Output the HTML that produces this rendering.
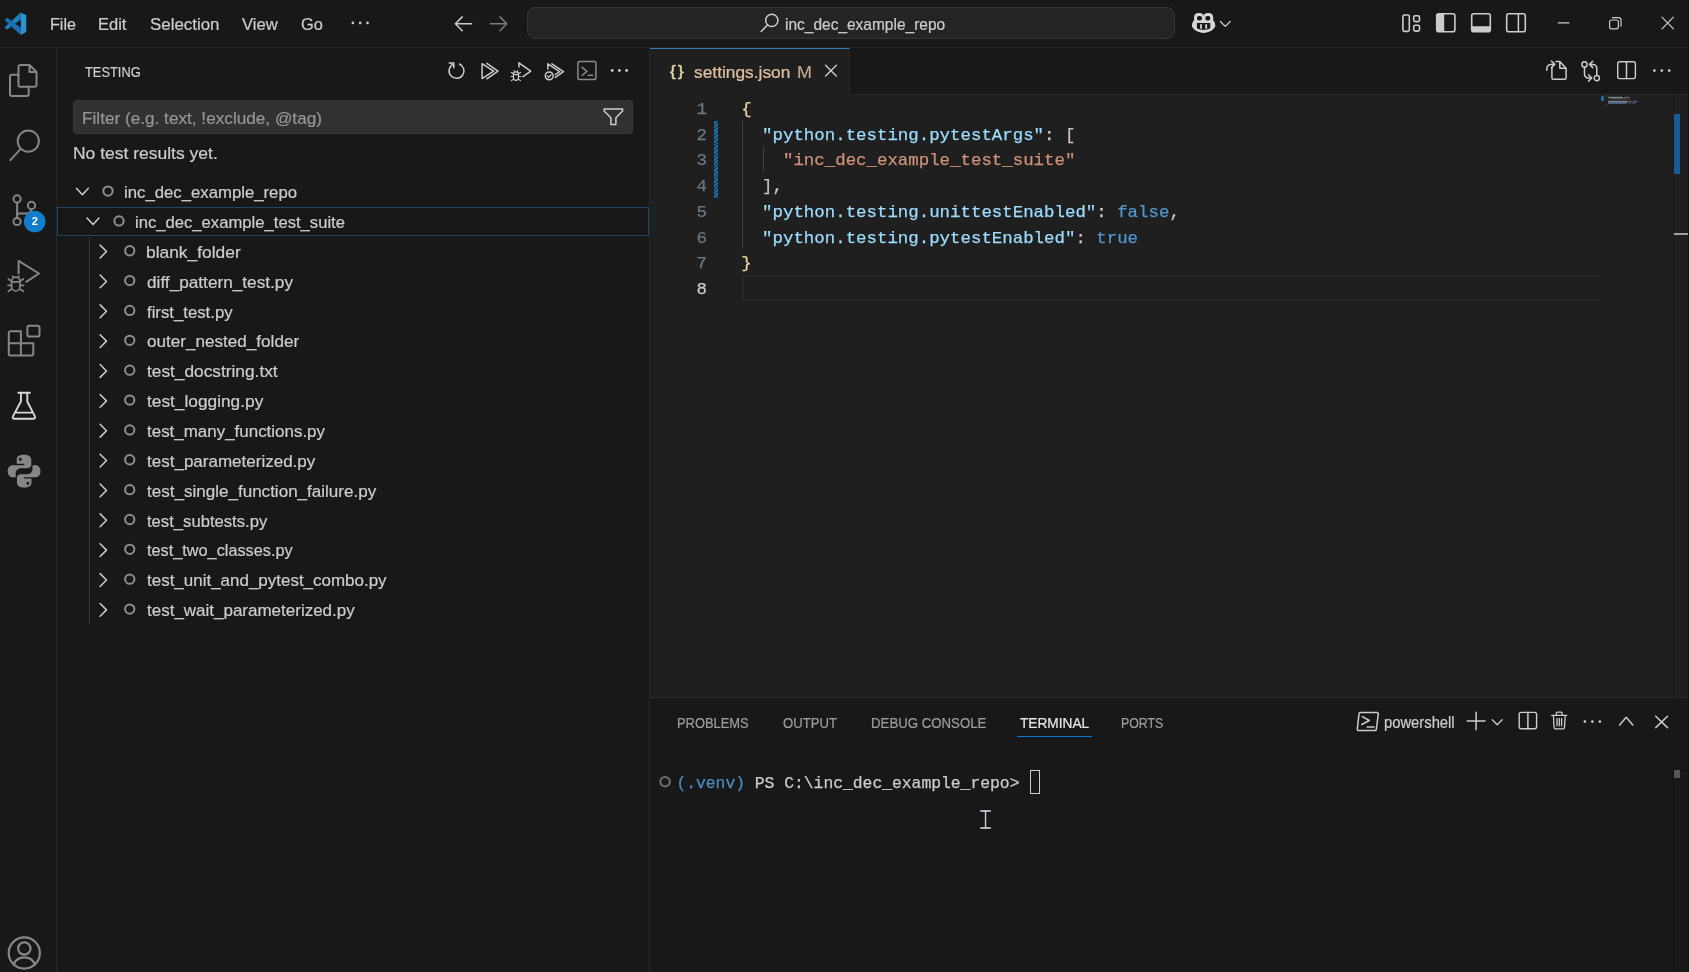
<!DOCTYPE html>
<html lang="en"><head><meta charset="utf-8"><title>settings.json - inc_dec_example_repo - Visual Studio Code</title>
<style>
html,body{margin:0;padding:0;background:#181818;}
body{width:1689px;height:972px;position:relative;overflow:hidden;font-family:"Liberation Sans",sans-serif;}
.b{position:absolute;box-sizing:border-box;}
.t{position:absolute;white-space:pre;transform-origin:0 0;-webkit-text-stroke:0.22px;font-family:"Liberation Sans",sans-serif;}
.c{position:absolute;white-space:pre;-webkit-text-stroke:0.25px;font-family:"Liberation Mono",monospace;font-size:17.42px;line-height:17.42px;letter-spacing:-0.002px;}
svg{position:absolute;left:0;top:0;}
</style></head><body>

<div class="b" style="left:0;top:0;width:1689px;height:48px;background:#181818;border-bottom:1px solid #262626"></div>
<div class="b" style="left:0;top:48px;width:57px;height:924px;background:#181818;border-right:1px solid #252525"></div>
<div class="b" style="left:57px;top:48px;width:593px;height:924px;background:#181818;border-right:1px solid #282828"></div>
<div class="b" style="left:527px;top:7px;width:647.5px;height:32px;background:#242424;border:1px solid #353535;border-radius:8px"></div>
<div class="b" style="left:73.4px;top:100.2px;width:559.6px;height:33.6px;background:#313131;border:1px solid #383838;border-radius:3.5px"></div>
<div class="b" style="left:57px;top:206.5px;width:592px;height:29.8px;border:1.6px solid #1d4568;background:#171717"></div>
<div class="b" style="left:89px;top:236.5px;width:1.2px;height:388px;background:#3a3a3a"></div>
<div class="b" style="left:650px;top:48px;width:1039px;height:47px;background:#181818;border-bottom:1px solid #282828"></div>
<div class="b" style="left:650px;top:48px;width:200px;height:47px;background:#1f1f1f;border-top:1.6px solid #3a79ad;border-right:1px solid #282828"></div>
<div class="b" style="left:650px;top:95px;width:1039px;height:603px;background:#1f1f1f"></div>
<div class="b" style="left:650px;top:697px;width:1039px;height:275px;background:#181818;border-top:1px solid #282828"></div>
<div class="b" style="left:742.4px;top:275.2px;width:858px;height:26.3px;border:2.6px solid #282828;border-right:none"></div>
<div class="b" style="left:713.6px;top:120.6px;width:4.6px;height:77.4px;background:repeating-linear-gradient(-45deg,#2676b0 0 1.3px,#134264 1.3px 2.6px)"></div>
<div class="b" style="left:742.0px;top:120.8px;width:1.2px;height:128px;background:#404040"></div>
<div class="b" style="left:763.3px;top:146.3px;width:1.2px;height:26px;background:#404040"></div>
<div class="b" style="left:1017px;top:736px;width:75px;height:1.4px;background:#0078d4"></div>
<div class="b" style="left:1673px;top:95px;width:1px;height:603px;background:#191919"></div>
<div class="b" style="left:1688px;top:0;width:1px;height:972px;background:#141414"></div>
<div class="b" style="left:1674px;top:114.4px;width:6.2px;height:59.4px;background:#175d94"></div>
<div class="b" style="left:1674px;top:233px;width:14px;height:2.2px;background:#a0a0a0"></div>
<div class="b" style="left:1673px;top:770px;width:15px;height:202px;border-left:1px solid #0f0f0f;border-top:1px solid #0f0f0f"></div>
<div class="b" style="left:1674px;top:770.2px;width:6.1px;height:7.9px;background:#585858"></div>
<div class="b" style="left:1029.8px;top:769.9px;width:10.4px;height:23.7px;border:1.35px solid #cdcdcd"></div>

<div id="txt" style="position:absolute;left:0;top:0;width:1689px;height:972px;will-change:transform">
<span class="t" id="m1" style="left:50.17px;top:15.87px;font-size:17.4px;line-height:17.4px;color:#cccccc;transform:scaleX(0.9260);">File</span>
<span class="t" id="m2" style="left:98.30px;top:15.87px;font-size:17.4px;line-height:17.4px;color:#cccccc;transform:scaleX(0.9490);">Edit</span>
<span class="t" id="m3" style="left:150.25px;top:15.87px;font-size:17.4px;line-height:17.4px;color:#cccccc;transform:scaleX(0.9701);">Selection</span>
<span class="t" id="m4" style="left:242.25px;top:15.87px;font-size:17.4px;line-height:17.4px;color:#cccccc;transform:scaleX(0.9585);">View</span>
<span class="t" id="m5" style="left:301.25px;top:15.87px;font-size:17.4px;line-height:17.4px;color:#cccccc;transform:scaleX(0.9433);">Go</span>
<span class="t" id="cc" style="left:785.29px;top:15.87px;font-size:16.1px;line-height:16.1px;color:#cccccc;transform:scaleX(0.9624);">inc_dec_example_repo</span>
<span class="t" id="sh" style="left:84.70px;top:65.06px;font-size:14.7px;line-height:14.7px;color:#cccccc;transform:scaleX(0.8747);">TESTING</span>
<span class="t" id="fl" style="left:81.51px;top:109.87px;font-size:17.4px;line-height:17.4px;color:#959595;transform:scaleX(0.9881);">Filter (e.g. text, !exclude, @tag)</span>
<span class="t" id="nr" style="left:73.20px;top:144.67px;font-size:17.4px;line-height:17.4px;color:#cccccc;transform:scaleX(1.0051);">No test results yet.</span>
<span class="t" id="r0" style="left:124.34px;top:184.17px;font-size:17.4px;line-height:17.4px;color:#cccccc;transform:scaleX(0.9621);">inc_dec_example_repo</span>
<span class="t" id="r1" style="left:135.34px;top:214.03px;font-size:17.4px;line-height:17.4px;color:#cccccc;transform:scaleX(0.9569);">inc_dec_example_test_suite</span>
<span class="t" id="r2" style="left:146.20px;top:243.89px;font-size:17.4px;line-height:17.4px;color:#cccccc;transform:scaleX(0.9994);">blank_folder</span>
<span class="t" id="r3" style="left:147.20px;top:273.75px;font-size:17.4px;line-height:17.4px;color:#cccccc;transform:scaleX(0.9892);">diff_pattern_test.py</span>
<span class="t" id="r4" style="left:147.20px;top:303.61px;font-size:17.4px;line-height:17.4px;color:#cccccc;transform:scaleX(0.9628);">first_test.py</span>
<span class="t" id="r5" style="left:147.20px;top:333.47px;font-size:17.4px;line-height:17.4px;color:#cccccc;transform:scaleX(0.9832);">outer_nested_folder</span>
<span class="t" id="r6" style="left:147.20px;top:363.33px;font-size:17.4px;line-height:17.4px;color:#cccccc;transform:scaleX(0.9937);">test_docstring.txt</span>
<span class="t" id="r7" style="left:147.20px;top:393.19px;font-size:17.4px;line-height:17.4px;color:#cccccc;transform:scaleX(0.9941);">test_logging.py</span>
<span class="t" id="r8" style="left:147.20px;top:423.05px;font-size:17.4px;line-height:17.4px;color:#cccccc;transform:scaleX(0.9743);">test_many_functions.py</span>
<span class="t" id="r9" style="left:147.20px;top:452.91px;font-size:17.4px;line-height:17.4px;color:#cccccc;transform:scaleX(0.9781);">test_parameterized.py</span>
<span class="t" id="r10" style="left:147.20px;top:482.77px;font-size:17.4px;line-height:17.4px;color:#cccccc;transform:scaleX(0.9797);">test_single_function_failure.py</span>
<span class="t" id="r11" style="left:147.20px;top:512.63px;font-size:17.4px;line-height:17.4px;color:#cccccc;transform:scaleX(0.9566);">test_subtests.py</span>
<span class="t" id="r12" style="left:147.20px;top:542.49px;font-size:17.4px;line-height:17.4px;color:#cccccc;transform:scaleX(0.9357);">test_two_classes.py</span>
<span class="t" id="r13" style="left:147.20px;top:572.35px;font-size:17.4px;line-height:17.4px;color:#cccccc;transform:scaleX(0.9757);">test_unit_and_pytest_combo.py</span>
<span class="t" id="r14" style="left:147.20px;top:602.21px;font-size:17.4px;line-height:17.4px;color:#cccccc;transform:scaleX(0.9767);">test_wait_parameterized.py</span>
<span class="t" id="tj" style="left:669.50px;top:62.90px;font-size:15.0px;line-height:15.0px;color:#e6d3aa;transform:scaleX(1.1200);-webkit-text-stroke:0.55px;">{</span>
<span class="t" id="tk" style="left:678.30px;top:62.90px;font-size:15.0px;line-height:15.0px;color:#e6d3aa;transform:scaleX(1.1200);-webkit-text-stroke:0.55px;">}</span>
<span class="t" id="tb" style="left:693.70px;top:64.17px;font-size:17.4px;line-height:17.4px;color:#dfc0a0;transform:scaleX(0.9969);">settings.json</span>
<span class="t" id="tm" style="left:796.67px;top:64.17px;font-size:17.4px;line-height:17.4px;color:#c4a68a;transform:scaleX(1.0308);">M</span>
<span class="t" id="p1" style="left:677.12px;top:715.76px;font-size:14.7px;line-height:14.7px;color:#9d9d9d;transform:scaleX(0.8785);">PROBLEMS</span>
<span class="t" id="p2" style="left:783.40px;top:715.76px;font-size:14.7px;line-height:14.7px;color:#9d9d9d;transform:scaleX(0.8956);">OUTPUT</span>
<span class="t" id="p3" style="left:870.70px;top:715.76px;font-size:14.7px;line-height:14.7px;color:#9d9d9d;transform:scaleX(0.9007);">DEBUG CONSOLE</span>
<span class="t" id="p4" style="left:1019.90px;top:715.76px;font-size:14.7px;line-height:14.7px;color:#e7e7e7;transform:scaleX(0.9313);">TERMINAL</span>
<span class="t" id="p5" style="left:1121.46px;top:715.76px;font-size:14.7px;line-height:14.7px;color:#9d9d9d;transform:scaleX(0.8398);">PORTS</span>
<span class="t" id="ps" style="left:1384.18px;top:714.37px;font-size:16.1px;line-height:16.1px;color:#cccccc;transform:scaleX(0.9183);">powershell</span>
<span class="c" style="left:675.65px;width:31.35px;text-align:right;top:101.05px;color:#6e7681">1</span>
<span class="c" style="left:741.20px;top:101.05px"><span style="color:#ead39f">{</span></span>
<span class="c" style="left:675.65px;width:31.35px;text-align:right;top:126.75px;color:#6e7681">2</span>
<span class="c" style="left:741.20px;top:126.75px"><span style="color:#cccccc">  </span><span style="color:#9cdcfe">&quot;python.testing.pytestArgs&quot;</span><span style="color:#cccccc">: </span><span style="color:#c9bdc6">[</span></span>
<span class="c" style="left:675.65px;width:31.35px;text-align:right;top:152.45px;color:#6e7681">3</span>
<span class="c" style="left:741.20px;top:152.45px"><span style="color:#cccccc">    </span><span style="color:#ce9178">&quot;inc_dec_example_test_suite&quot;</span></span>
<span class="c" style="left:675.65px;width:31.35px;text-align:right;top:178.15px;color:#6e7681">4</span>
<span class="c" style="left:741.20px;top:178.15px"><span style="color:#cccccc">  </span><span style="color:#c9bdc6">]</span><span style="color:#cccccc">,</span></span>
<span class="c" style="left:675.65px;width:31.35px;text-align:right;top:203.85px;color:#6e7681">5</span>
<span class="c" style="left:741.20px;top:203.85px"><span style="color:#cccccc">  </span><span style="color:#9cdcfe">&quot;python.testing.unittestEnabled&quot;</span><span style="color:#cccccc">: </span><span style="color:#4f97cf">false</span><span style="color:#cccccc">,</span></span>
<span class="c" style="left:675.65px;width:31.35px;text-align:right;top:229.55px;color:#6e7681">6</span>
<span class="c" style="left:741.20px;top:229.55px"><span style="color:#cccccc">  </span><span style="color:#9cdcfe">&quot;python.testing.pytestEnabled&quot;</span><span style="color:#cccccc">: </span><span style="color:#4f97cf">true</span></span>
<span class="c" style="left:675.65px;width:31.35px;text-align:right;top:255.25px;color:#6e7681">7</span>
<span class="c" style="left:741.20px;top:255.25px"><span style="color:#ead39f">}</span></span>
<span class="c" style="left:675.65px;width:31.35px;text-align:right;top:280.95px;color:#cccccc">8</span>
<span class="c" style="left:676.4px;top:776.33px;font-size:16.4px;line-height:16.4px;letter-spacing:-0.035px"><span style="color:#4b8cc2">(.venv)</span><span style="color:#cccccc"> PS C:\inc_dec_example_repo&gt; </span></span>
</div>
<svg width="1689" height="972" viewBox="0 0 1689 972"><path d="M20.6,12.4 L26.3,15.2 V32.1 L20.6,34.9 Z" fill="#2b93d4" />
<path d="M20.6,12.4 V19.8 L7.3,29.6 L4.5,27.4 Z" fill="#1e7cc0" />
<path d="M4.5,19.9 L7.3,17.7 L20.6,27.5 V34.9 Z" fill="#1a70b0" />
<path d="M20.6,19.8 V27.5 L15.4,23.65 Z" fill="#181818" />
<path d="M471.6,23.8 H455.6 M462.2,16.900 L455.4,23.8 L462.2,30.700" fill="none" stroke="#cccccc" stroke-width="1.5" stroke-linecap="round" stroke-linejoin="round" />
<path d="M490.4,23.8 H506.6 M500,16.900 L506.8,23.8 L500,30.700" fill="none" stroke="#7d7d7d" stroke-width="1.5" stroke-linecap="round" stroke-linejoin="round" />
<path d="M777.9,20.4 a6.1,6.1 0 1 1 -12.2,0 a6.1,6.1 0 1 1 12.2,0 Z M767.4,25 L761.2,31.4" fill="none" stroke="#cccccc" stroke-width="1.5" stroke-linecap="round" stroke-linejoin="round" />
<rect x="1194" y="13.1" width="10" height="10.4" rx="4.3" fill="#d6d6d6"/><rect x="1203.2" y="13.1" width="10" height="10.4" rx="4.3" fill="#d6d6d6"/>
<path d="M1194.2,20 C1192.8,21.6 1192,23.2 1192,25 v1.600 c1.800,3.800 6.400,6.300 11.600,6.300 c5.200,0 9.800,-2.500 11.600,-6.300 v-1.600 c0,-1.800 -0.800,-3.400 -2.200,-5 Z" fill="#d6d6d6" />
<path d="M1199,16.1 h1 a2,2 0 0 1 2,2 v0.500 a2,2 0 0 1 -2,2 h-1 a2,2 0 0 1 -2,-2 v-0.500 a2,2 0 0 1 2,-2 Z M1207.300,16.100 h1 a2,2 0 0 1 2,2 v0.500 a2,2 0 0 1 -2,2 h-1 a2,2 0 0 1 -2,-2 v-0.500 a2,2 0 0 1 2,-2 Z" fill="#181818" />
<path d="M1196.900,23 H1210.300 V28.300 c-1.800,1 -4.200,1.500 -6.700,1.500 c-2.500,0 -4.900,-0.500 -6.700,-1.500 Z" fill="#181818" />
<path d="M1200.100,24.200 h1.800 v4.600 h-1.800 Z M1205.300,24.200 h1.800 v4.600 h-1.800 Z" fill="#d6d6d6" />
<path d="M1220.4,21.5 L1225.3,26.4 L1230.2,21.5" fill="none" stroke="#cccccc" stroke-width="1.3" stroke-linecap="round" stroke-linejoin="round" />
<rect x="1402.9" y="15" width="6.4" height="16.4" rx="1.6" fill="none" stroke="#cccccc" stroke-width="1.6"/>
<rect x="1413.7" y="15.7" width="5.8" height="5.9" rx="1.6" fill="none" stroke="#cccccc" stroke-width="1.6"/>
<rect x="1413.7" y="25.2" width="5.8" height="5.9" rx="1.6" fill="none" stroke="#cccccc" stroke-width="1.6"/>
<rect x="1436.7" y="13.8" width="18.2" height="18" rx="2" fill="none" stroke="#cccccc" stroke-width="1.6"/>
<path d="M1438.6,13.8 H1444.2 V31.8 H1438.6 a2,2 0 0 1 -2,-2 V15.8 a2,2 0 0 1 2,-2 Z" fill="#cccccc" />
<rect x="1471.7" y="13.8" width="18.6" height="18" rx="2" fill="none" stroke="#cccccc" stroke-width="1.6"/>
<path d="M1471.7,26.2 H1490.3 V29.8 a2,2 0 0 1 -2,2 H1473.7 a2,2 0 0 1 -2,-2 Z" fill="#cccccc" />
<rect x="1506.7" y="13.8" width="18.6" height="18" rx="2" fill="none" stroke="#cccccc" stroke-width="1.6"/>
<path d="M1518.4,13.8 V31.8" fill="none" stroke="#cccccc" stroke-width="1.5" stroke-linecap="round" stroke-linejoin="round" />
<path d="M1558.2,22.8 H1569" fill="none" stroke="#cccccc" stroke-width="1.2" stroke-linecap="round" stroke-linejoin="round" />
<rect x="1609.6" y="20" width="8.8" height="8.8" rx="2" fill="none" stroke="#cccccc" stroke-width="1.2"/>
<path d="M1612.4,17.6 H1618.6 a2.4,2.4 0 0 1 2.4,2.4 V26.2" fill="none" stroke="#cccccc" stroke-width="1.2" stroke-linecap="round" stroke-linejoin="round" />
<path d="M1662,17.2 L1673.4,28.8 M1673.4,17.2 L1662,28.8" fill="none" stroke="#cccccc" stroke-width="1.2" stroke-linecap="round" stroke-linejoin="round" />
<path d="M29.5,65 H20.2 a1.7,1.7 0 0 0 -1.7,1.7 V85 a1.700,1.700 0 0 0 1.7,1.7 H34.800 a1.700,1.700 0 0 0 1.7,-1.7 V72 L29.5,65 V72 H36.5" fill="none" stroke="#868686" stroke-width="2" stroke-linecap="round" stroke-linejoin="round" />
<path d="M18.5,74.8 H11.700 a1.700,1.700 0 0 0 -1.7,1.7 V94.2 a1.700,1.700 0 0 0 1.7,1.7 H27 a1.700,1.700 0 0 0 1.7,-1.7 V86.700" fill="none" stroke="#868686" stroke-width="2" stroke-linecap="round" stroke-linejoin="round" />
<path d="M38.9,141.1 a10.600,10.600 0 1 1 -21.2,0 a10.600,10.600 0 1 1 21.2,0 Z M20.9,148.700 L10.400,160.200" fill="none" stroke="#868686" stroke-width="2" stroke-linecap="round" stroke-linejoin="round" />
<path d="M20.700,198.9 a3.600,3.600 0 1 1 -7.2,0 a3.600,3.600 0 1 1 7.2,0 Z M20.700,221.5 a3.600,3.600 0 1 1 -7.2,0 a3.600,3.600 0 1 1 7.2,0 Z M35.100,205.4 a3.600,3.600 0 1 1 -7.2,0 a3.600,3.600 0 1 1 7.2,0 Z M17.100,202.5 V217.900 M31.200,209 c0,3 -2.200,4.500 -5.600,4.500 H17.100" fill="none" stroke="#868686" stroke-width="2" stroke-linecap="round" stroke-linejoin="round" />
<circle cx="34.7" cy="221.5" r="10.8" fill="#127dcb"/>
<text x="34.8" y="225.4" font-family="Liberation Sans, sans-serif" font-size="11" font-weight="bold" fill="#ffffff" text-anchor="middle">2</text>
<circle cx="352.9" cy="22.9" r="1.35" fill="#cccccc"/><circle cx="360.2" cy="22.9" r="1.35" fill="#cccccc"/><circle cx="367.5" cy="22.9" r="1.35" fill="#cccccc"/>
<path d="M18.600,273.200 V260.900 L39,273.500 L26.200,281.800" fill="none" stroke="#868686" stroke-width="2" stroke-linecap="round" stroke-linejoin="round" />
<path d="M11.600,281.400 a4.200,4.200 0 0 1 8.400,0 v5.400 a4.200,4.200 0 0 1 -8.400,0 Z M11.600,281.900 h8.400 M8,285.300 h3.600 M20,285.300 h3.600 M8.400,279 l3.200,2.300 M23.200,279 l-3.200,2.300 M8.400,291.300 l3.500,-2.600 M23.200,291.300 l-3.500,-2.600 M13.800,277.700 l-1.200,-1.500 M17.800,277.700 l1.200,-1.500" fill="none" stroke="#868686" stroke-width="1.7" stroke-linecap="round" stroke-linejoin="round" />
<path d="M10.500,331.200 H20.900 V343.300 H33.300 V353.700 a1.700,1.700 0 0 1 -1.700,1.700 H10.500 a1.700,1.700 0 0 1 -1.700,-1.700 V332.900 a1.700,1.700 0 0 1 1.700,-1.700 Z M8.800,343.300 H20.900 V355.400" fill="none" stroke="#868686" stroke-width="2" stroke-linecap="round" stroke-linejoin="round" />
<rect x="27.4" y="325.7" width="12.1" height="10.9" rx="1.8" fill="none" stroke="#868686" stroke-width="2"/>
<path d="M18.300,392.700 H29.900 M20.900,392.700 V401.500 L12.900,416.400 a1.600,1.600 0 0 0 1.400,2.400 H33.500 a1.600,1.600 0 0 0 1.400,-2.400 L27.300,401.500 V392.700 M15.300,412.600 H32.500" fill="none" stroke="#d7d7d7" stroke-width="1.9" stroke-linecap="round" stroke-linejoin="round" />
<g transform="translate(7.700,454.800)" fill="#868686" fill-rule="evenodd"><path d="M16.100,0 C10.200,0 9,2.400 9,5 V9 H16.500 V10.400 H5 C2,10.400 0,13 0,16.400 C0,19.800 2,22.400 5,22.400 H8 V18.600 C8,15.600 10.400,13.400 13.200,13.400 H20 C22.200,13.400 23.600,11.800 23.600,9.800 V5 C23.600,2 21,0 16.100,0 Z M12.600,2.900 a1.500,1.500 0 1 1 0,3 a1.500,1.500 0 1 1 0,-3 Z"/><path d="M16.100,0 C10.200,0 9,2.400 9,5 V9 H16.500 V10.400 H5 C2,10.400 0,13 0,16.400 C0,19.800 2,22.400 5,22.400 H8 V18.600 C8,15.600 10.400,13.400 13.200,13.400 H20 C22.200,13.400 23.600,11.800 23.600,9.800 V5 C23.600,2 21,0 16.100,0 Z M12.600,2.900 a1.500,1.500 0 1 1 0,3 a1.500,1.500 0 1 1 0,-3 Z" transform="rotate(180 16.400 16.400)"/></g>
<path d="M39.900,953 a15.600,15.600 0 1 1 -31.200,0 a15.600,15.600 0 1 1 31.200,0 Z M30.500,948.500 a6.200,6.200 0 1 1 -12.400,0 a6.200,6.200 0 1 1 12.400,0 Z M13.600,964.800 C15.400,959.600 19.400,957.400 24.300,957.400 C29.200,957.400 33.200,959.600 35,964.800" fill="none" stroke="#868686" stroke-width="2.2" stroke-linecap="round" stroke-linejoin="round" />
<g transform="translate(446.3,59.6) scale(1.357)" fill="none" stroke="#cccccc" stroke-width="1.1" stroke-linecap="round" stroke-linejoin="round" ><path d="M2.200,2.500 H5.500 V6"/><path d="M4.900,3.500 A5.500,5.500 0 1 0 9.700,3.270"/></g>
<g transform="translate(478.7,59.7) scale(1.357)" fill="none" stroke="#cccccc" stroke-width="1.1" stroke-linecap="round" stroke-linejoin="round" ><path d="M2.500,2.900 L11,8.420 L2.500,13.900 Z"/><path d="M6,2.700 L14.200,8.420 L6,14.100"/></g>
<g transform="translate(510.1,58.9) scale(1.357)" fill="none" stroke="#cccccc" stroke-width="1.1" stroke-linecap="round" stroke-linejoin="round" ><path d="M6.500,6 V2.900 L15.200,9 L9.500,13"/><path d="M2.400,11.500 a1.900,1.900 0 0 1 3.800,0 v2.400 a1.900,1.900 0 0 1 -3.800,0 Z M2.400,11.600 h3.800 M0.700,13 h1.700 M6.200,13 h1.700 M1,10 l1.400,1 M7.600,10 l-1.400,1 M1,16 l1.500,-1.100 M7.600,16 l-1.500,-1.100 M3.400,9.500 l-0.500,-0.800 M5.200,9.500 l0.500,-0.800" stroke-width="0.85"/></g>
<g transform="translate(542.7,58.9) scale(1.357)" fill="none" stroke="#cccccc" stroke-width="1.1" stroke-linecap="round" stroke-linejoin="round" ><path d="M3.800,7.500 V3.600 L12.500,9.300 L9.300,11.500"/><path d="M6.800,3.600 L15.300,9.300 L9.300,13.600"/><circle cx="4.800" cy="12.500" r="2.900"/><path d="M3.500,12.600 l1,1 l1.700,-2" stroke-width="0.9"/></g>
<g transform="translate(575.3,58.9) scale(1.357)" fill="none" stroke="#8a8a8a" stroke-width="1.1" stroke-linecap="round" stroke-linejoin="round" ><rect x="1.900" y="1.900" width="13.300" height="13.200" rx="1.300"/><path d="M5,6.200 L8.600,9.200 L5,12.200 M9.400,12.100 H12.800"/></g>
<circle cx="612.1999999999999" cy="70.5" r="1.4" fill="#cccccc"/><circle cx="619.4" cy="70.5" r="1.4" fill="#cccccc"/><circle cx="626.6" cy="70.5" r="1.4" fill="#cccccc"/>
<path d="M604.100,108.900 H622.600 V111 L615.900,117.800 V124.400 H610.900 V117.800 L604.100,111 Z" fill="none" stroke="#cccccc" stroke-width="1.5" stroke-linecap="round" stroke-linejoin="round" />
<path d="M76.4,188.23 L82.4,194.73 L88.4,188.23" fill="none" stroke="#cccccc" stroke-width="1.5" stroke-linecap="round" stroke-linejoin="round" />
<circle cx="108.0" cy="191.03" r="4.650" fill="none" stroke="#8e8e8e" stroke-width="2"/>
<path d="M87,218.08999999999997 L93,224.58999999999997 L99,218.08999999999997" fill="none" stroke="#cccccc" stroke-width="1.5" stroke-linecap="round" stroke-linejoin="round" />
<circle cx="119.0" cy="220.89" r="4.650" fill="none" stroke="#8e8e8e" stroke-width="2"/>
<path d="M100.100,245.15 L106.500,251.55 L100.100,257.95" fill="none" stroke="#cccccc" stroke-width="1.5" stroke-linecap="round" stroke-linejoin="round" />
<circle cx="129.750" cy="250.75" r="4.650" fill="none" stroke="#8e8e8e" stroke-width="2"/>
<path d="M100.100,275.01 L106.500,281.41 L100.100,287.81" fill="none" stroke="#cccccc" stroke-width="1.5" stroke-linecap="round" stroke-linejoin="round" />
<circle cx="129.750" cy="280.61" r="4.650" fill="none" stroke="#8e8e8e" stroke-width="2"/>
<path d="M100.100,304.87 L106.500,311.27 L100.100,317.67" fill="none" stroke="#cccccc" stroke-width="1.5" stroke-linecap="round" stroke-linejoin="round" />
<circle cx="129.750" cy="310.47" r="4.650" fill="none" stroke="#8e8e8e" stroke-width="2"/>
<path d="M100.100,334.73 L106.500,341.13 L100.100,347.53" fill="none" stroke="#cccccc" stroke-width="1.5" stroke-linecap="round" stroke-linejoin="round" />
<circle cx="129.750" cy="340.33" r="4.650" fill="none" stroke="#8e8e8e" stroke-width="2"/>
<path d="M100.100,364.59 L106.500,370.99 L100.100,377.39" fill="none" stroke="#cccccc" stroke-width="1.5" stroke-linecap="round" stroke-linejoin="round" />
<circle cx="129.750" cy="370.19" r="4.650" fill="none" stroke="#8e8e8e" stroke-width="2"/>
<path d="M100.100,394.45 L106.500,400.85 L100.100,407.25" fill="none" stroke="#cccccc" stroke-width="1.5" stroke-linecap="round" stroke-linejoin="round" />
<circle cx="129.750" cy="400.05" r="4.650" fill="none" stroke="#8e8e8e" stroke-width="2"/>
<path d="M100.100,424.31 L106.500,430.71 L100.100,437.11" fill="none" stroke="#cccccc" stroke-width="1.5" stroke-linecap="round" stroke-linejoin="round" />
<circle cx="129.750" cy="429.91" r="4.650" fill="none" stroke="#8e8e8e" stroke-width="2"/>
<path d="M100.100,454.17 L106.500,460.57 L100.100,466.97" fill="none" stroke="#cccccc" stroke-width="1.5" stroke-linecap="round" stroke-linejoin="round" />
<circle cx="129.750" cy="459.77" r="4.650" fill="none" stroke="#8e8e8e" stroke-width="2"/>
<path d="M100.100,484.03 L106.500,490.43 L100.100,496.83" fill="none" stroke="#cccccc" stroke-width="1.5" stroke-linecap="round" stroke-linejoin="round" />
<circle cx="129.750" cy="489.63" r="4.650" fill="none" stroke="#8e8e8e" stroke-width="2"/>
<path d="M100.100,513.89 L106.500,520.29 L100.100,526.69" fill="none" stroke="#cccccc" stroke-width="1.5" stroke-linecap="round" stroke-linejoin="round" />
<circle cx="129.750" cy="519.49" r="4.650" fill="none" stroke="#8e8e8e" stroke-width="2"/>
<path d="M100.100,543.75 L106.500,550.15 L100.100,556.55" fill="none" stroke="#cccccc" stroke-width="1.5" stroke-linecap="round" stroke-linejoin="round" />
<circle cx="129.750" cy="549.35" r="4.650" fill="none" stroke="#8e8e8e" stroke-width="2"/>
<path d="M100.100,573.61 L106.500,580.01 L100.100,586.41" fill="none" stroke="#cccccc" stroke-width="1.5" stroke-linecap="round" stroke-linejoin="round" />
<circle cx="129.750" cy="579.21" r="4.650" fill="none" stroke="#8e8e8e" stroke-width="2"/>
<path d="M100.100,603.47 L106.500,609.87 L100.100,616.27" fill="none" stroke="#cccccc" stroke-width="1.5" stroke-linecap="round" stroke-linejoin="round" />
<circle cx="129.750" cy="609.07" r="4.650" fill="none" stroke="#8e8e8e" stroke-width="2"/>
<path d="M825.600,65.300 L836.300,76 M836.300,65.300 L825.600,76" fill="none" stroke="#cccccc" stroke-width="1.4" stroke-linecap="round" stroke-linejoin="round" />
<path d="M1551.900,67.500 V77.700 a1.500,1.500 0 0 0 1.500,1.500 H1564.600 a1.500,1.500 0 0 0 1.500,-1.500 V68.300 L1559.800,61.600 H1556 M1559.800,61.600 V68.300 H1566.100" fill="none" stroke="#cccccc" stroke-width="1.5" stroke-linecap="round" stroke-linejoin="round" />
<path d="M1546.900,70.200 V68.400 a4,4 0 0 1 4,-4 H1554.600 M1551.400,61 L1554.800,64.400 L1551.400,67.800" fill="none" stroke="#cccccc" stroke-width="1.5" stroke-linecap="round" stroke-linejoin="round" />
<path d="M1587.100,64.400 a2.600,2.600 0 1 1 -5.200,0 a2.600,2.600 0 1 1 5.200,0 Z M1599.400,78.100 a2.600,2.600 0 1 1 -5.200,0 a2.600,2.600 0 1 1 5.200,0 Z M1584.500,67.200 V74.200 a3.800,3.800 0 0 0 3.800,3.800 H1591.400 M1588.500,74.800 L1591.700,78 L1588.500,81.200 M1596.800,75.300 V68.200 a3.800,3.800 0 0 0 -3.800,-3.800 H1589.800 M1592.700,61.200 L1589.500,64.400 L1592.700,67.600" fill="none" stroke="#cccccc" stroke-width="1.5" stroke-linecap="round" stroke-linejoin="round" />
<rect x="1617.700" y="61.700" width="17.700" height="16.900" rx="2" fill="none" stroke="#cccccc" stroke-width="1.4"/>
<path d="M1626.500,61.700 V78.600" fill="none" stroke="#cccccc" stroke-width="1.5" stroke-linecap="round" stroke-linejoin="round" />
<circle cx="1654.3999999999999" cy="70.6" r="1.35" fill="#cccccc"/><circle cx="1661.8" cy="70.6" r="1.35" fill="#cccccc"/><circle cx="1669.2" cy="70.6" r="1.35" fill="#cccccc"/>
<path d="M1360.400,712.600 H1377 a1.300,1.300 0 0 1 1.300,1.500 L1376.300,729.300 a1.500,1.500 0 0 1 -1.500,1.300 H1358.600 a1.300,1.300 0 0 1 -1.300,-1.500 L1359,713.900 a1.500,1.500 0 0 1 1.400,-1.300 Z M1362.300,716.600 L1369.300,720.500 L1361.700,724.500 M1367.200,726.900 H1374" fill="none" stroke="#cccccc" stroke-width="1.5" stroke-linecap="round" stroke-linejoin="round" />
<path d="M1467.200,721 H1485 M1476.100,712.300 V729.700" fill="none" stroke="#cccccc" stroke-width="1.5" stroke-linecap="round" stroke-linejoin="round" />
<path d="M1492.300,719.700 L1497.200,724.700 L1502.200,719.700" fill="none" stroke="#cccccc" stroke-width="1.3" stroke-linecap="round" stroke-linejoin="round" />
<rect x="1519.200" y="712.400" width="17.400" height="16.400" rx="2" fill="none" stroke="#cccccc" stroke-width="1.4"/>
<path d="M1527.900,712.400 V728.800" fill="none" stroke="#cccccc" stroke-width="1.5" stroke-linecap="round" stroke-linejoin="round" />
<path d="M1551.700,715.300 H1566.800 M1556.300,715 V713.300 a1.200,1.200 0 0 1 1.200,-1.200 H1561 a1.200,1.200 0 0 1 1.200,1.200 V715 M1553.400,715.500 L1554.100,727.400 a1.500,1.500 0 0 0 1.500,1.400 H1563 a1.500,1.500 0 0 0 1.500,-1.400 L1565.200,715.500 M1557,718.500 V725.800 M1559.300,718.500 V725.800 M1561.600,718.500 V725.800" fill="none" stroke="#cccccc" stroke-width="1.3" stroke-linecap="round" stroke-linejoin="round" />
<circle cx="1584.9" cy="721.6" r="1.35" fill="#cccccc"/><circle cx="1592.4" cy="721.6" r="1.35" fill="#cccccc"/><circle cx="1599.9" cy="721.6" r="1.35" fill="#cccccc"/>
<path d="M1619.600,724.900 L1626.200,717.200 L1632.800,724.900" fill="none" stroke="#cccccc" stroke-width="1.5" stroke-linecap="round" stroke-linejoin="round" />
<path d="M1655.700,716.200 L1667.500,727.600 M1667.500,716.200 L1655.700,727.600" fill="none" stroke="#cccccc" stroke-width="1.5" stroke-linecap="round" stroke-linejoin="round" />
<circle cx="665.100" cy="781.700" r="4.700" fill="none" stroke="#6c6c6c" stroke-width="2.200"/>
<path d="M980,809.900 H991.100 V812.100 H986.500 V826.900 H991.100 V829.100 H980 V826.900 H984.700 V812.100 H980 Z" fill="#d3dde8" stroke="#0e0e0e" stroke-width="0.5"/>
<rect x="1606" y="95.4" width="1" height="1" fill="#b0b0a0" opacity="0.5"/>
<rect x="1608" y="96.8" width="15" height="1.2" fill="#c0c8d0" opacity="0.62"/>
<rect x="1624" y="96.8" width="6" height="1.2" fill="#a0a0a0" opacity="0.5"/>
<rect x="1609.5" y="98.2" width="17" height="1.1" fill="#b09a8c" opacity="0.5"/>
<rect x="1627.5" y="98.6" width="3" height="0.9" fill="#909090" opacity="0.4"/>
<rect x="1608" y="100.8" width="20" height="1.3" fill="#8fb0d8" opacity="0.72"/>
<rect x="1629" y="100.8" width="3" height="1.3" fill="#a0a0a0" opacity="0.45"/>
<rect x="1633" y="100.8" width="4.4" height="1.3" fill="#5f8fc4" opacity="0.6"/>
<rect x="1608" y="102.3" width="19" height="1.3" fill="#8fb0d8" opacity="0.68"/>
<rect x="1628" y="102.3" width="3" height="1.3" fill="#a0a0a0" opacity="0.4"/>
<rect x="1632" y="102.3" width="3.4" height="1.2" fill="#5f8fc4" opacity="0.55"/>
<rect x="1606" y="104.5" width="1" height="1" fill="#b0b0a0" opacity="0.5"/>
<rect x="1600.800" y="96" width="3.400" height="5.200" fill="#15477a"/><rect x="1601.800" y="96.600" width="1.400" height="4" fill="#3d7fbd"/></svg>
</body></html>
